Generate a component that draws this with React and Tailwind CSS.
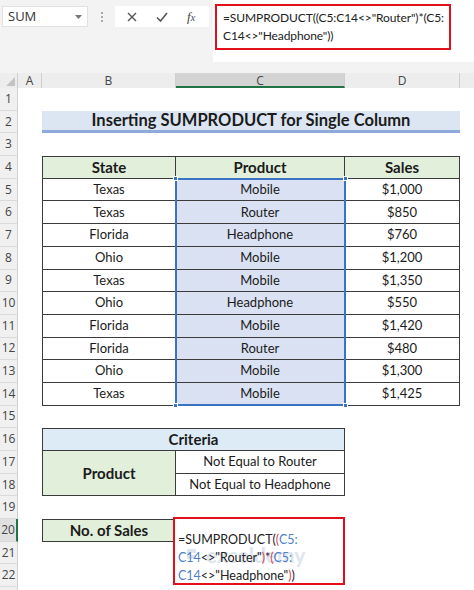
import React from 'react';

const ROW = [
  '', 'row-start-1', 'row-start-2', 'row-start-3', 'row-start-4', 'row-start-5', 'row-start-6',
  'row-start-7', 'row-start-8', 'row-start-9', 'row-start-10', 'row-start-11', 'row-start-12',
  'row-start-13', 'row-start-14', 'row-start-15', 'row-start-16', 'row-start-17', 'row-start-18',
  'row-start-19', 'row-start-20', 'row-start-21', 'row-start-22', 'row-start-23',
];
const COL = ['', 'col-start-1', 'col-start-2', 'col-start-3', 'col-start-4', 'col-start-5', 'col-start-6'];

const SALES = [
  ['Texas', 'Mobile', '$1,000'],
  ['Texas', 'Router', '$850'],
  ['Florida', 'Headphone', '$760'],
  ['Ohio', 'Mobile', '$1,200'],
  ['Texas', 'Mobile', '$1,350'],
  ['Ohio', 'Headphone', '$550'],
  ['Florida', 'Mobile', '$1,420'],
  ['Florida', 'Router', '$480'],
  ['Ohio', 'Mobile', '$1,300'],
  ['Texas', 'Mobile', '$1,425'],
];

const LINE = 'border-[#3b3b3b]';

function Cell({ col, row, className = '', children }) {
  return (
    <div className={`${COL[col]} ${ROW[row]} flex items-center justify-center ${className}`}>
      {children}
    </div>
  );
}

function Toolbar() {
  return (
    <div className="flex h-[73px] bg-[#f3f3f3] font-['Open_Sans',sans-serif]">
      {/* Name box */}
      <div className="ml-[2px] mt-[6px] flex h-[21px] w-[86px] items-center justify-between border border-[#e1e1e1] bg-white pl-[5px] pr-[5px] text-[13px] text-[#333]">
        <span>SUM</span>
        <svg width="7" height="4" viewBox="0 0 7 4"><path d="M0 0h7L3.5 4z" fill="#777" /></svg>
      </div>
      <div className="ml-[13px] mt-[12px] flex flex-col gap-[2px]">
        <span className="h-[2px] w-[2px] bg-[#aaa]" />
        <span className="h-[2px] w-[2px] bg-[#aaa]" />
        <span className="h-[2px] w-[2px] bg-[#aaa]" />
      </div>
      {/* Cancel / enter / fx */}
      <div className="ml-[12px] mt-[6px] flex h-[21px] w-[94px] items-center bg-white pl-[12px]">
        <svg width="10" height="10" viewBox="0 0 10 10"><path d="M1 1l8 8M9 1l-8 8" stroke="#555" strokeWidth="1.4" /></svg>
        <svg className="ml-[19px]" width="12" height="10" viewBox="0 0 12 10"><path d="M1 5.5l3.5 3.5L11 1" stroke="#555" strokeWidth="1.6" fill="none" /></svg>
        <span className="ml-[19px] font-['Liberation_Serif',serif] text-[13px] italic text-[#444]">
          f<span className="text-[10px]">x</span>
        </span>
      </div>
      {/* Formula area */}
      <div className="ml-[4px] h-[62px] flex-1 bg-white pl-[2px] pt-[4px]">
        <div className="h-[46px] w-[236px] whitespace-nowrap border-[2.5px] border-[#e3101b] pl-[6px] pt-[3px] font-['Lato',sans-serif] text-[12px] leading-[18px] tracking-[-0.1px] text-[#222]">
          =SUMPRODUCT((C5:C14&lt;&gt;"Router")*(C5:
          <br />
          C14&lt;&gt;"Headphone"))
        </div>
      </div>
    </div>
  );
}

function ColumnHeaders() {
  return (
    <div className="flex h-[15px] bg-[#ededed] font-['Open_Sans',sans-serif] text-[12px] leading-[15px] text-[#444]">
      <div className="relative w-[18px] border-r border-[#cfcfcf]">
        <svg className="absolute bottom-[2px] right-[2px]" width="9" height="9" viewBox="0 0 9 9"><path d="M9 0v9H0z" fill="#c4c4c4" /></svg>
      </div>
      <div className="w-[24px] border-r border-[#cfcfcf] text-center">A</div>
      <div className="w-[134px] border-r border-[#cfcfcf] text-center">B</div>
      <div className="w-[169px] border-r border-b-2 border-[#cfcfcf] border-b-[#217346] bg-[#d4d4d4] text-center">C</div>
      <div className="w-[115px] border-r border-[#cfcfcf] text-center">D</div>
      <div className="flex-1" />
    </div>
  );
}

function Handle({ className }) {
  return <span className={`absolute h-[5px] w-[5px] border border-white bg-[#3a72c4] ${className}`} />;
}

function Sheet() {
  const rows = Array.from({ length: 23 }, (_, i) => i + 1);
  return (
    <div className="grid grid-cols-[18px_24px_134px_169px_115px_1fr] grid-rows-[repeat(23,22.7px)] text-[13px]">
      {rows.map((r) => (
        <div
          key={r}
          className={`${COL[1]} ${ROW[r]} flex items-center justify-center border-b border-[#dadada] font-['Open_Sans',sans-serif] text-[12px] text-[#444] ${
            r === 20 ? 'border-r-2 border-r-[#217346] bg-[#e0e0e0]' : 'border-r border-r-[#cfcfcf] bg-[#f0f0f0]'
          }`}
        >
          {r < 23 ? r : ''}
        </div>
      ))}

      {/* Title */}
      <div className={`${COL[3]} ${ROW[2]} col-span-3 flex items-center justify-center border-b-[3px] border-[#8eaadb] bg-[#dce6f2] text-[16.5px] font-bold`}>
        Inserting SUMPRODUCT for Single Column
      </div>

      {/* Main table header */}
      {['State', 'Product', 'Sales'].map((h, i) => (
        <Cell
          key={h}
          col={3 + i}
          row={4}
          className={`border-y border-r ${i === 0 ? 'border-l' : ''} ${LINE} bg-[#e2efda] text-[15px] font-bold`}
        >
          {h}
        </Cell>
      ))}

      {/* Main table body */}
      {SALES.map((rec, ri) =>
        rec.map((v, ci) => (
          <Cell
            key={`${ri}-${ci}`}
            col={3 + ci}
            row={5 + ri}
            className={`border-b border-r ${ci === 0 ? 'border-l' : ''} ${LINE} ${ci === 1 ? 'bg-[#d9e1f2]' : ''}`}
          >
            {v}
          </Cell>
        ))
      )}

      {/* Selection outline C5:C14 */}
      <div className={`${COL[4]} ${ROW[5]} relative row-span-10 -ml-[1px] -mr-[1px] -mt-[1px] border-2 border-[#3a72c4]`}>
        <Handle className="-left-[4px] -top-[4px]" />
        <Handle className="-right-[4px] -top-[4px]" />
        <Handle className="-bottom-[4px] -left-[4px]" />
        <Handle className="-bottom-[4px] -right-[4px]" />
      </div>

      {/* Criteria */}
      <div className={`${COL[3]} ${ROW[16]} col-span-2 flex items-center justify-center border border-[#3b3b3b] bg-[#ddebf7] text-[15px] font-bold`}>
        Criteria
      </div>
      <div className={`${COL[3]} ${ROW[17]} row-span-2 flex items-center justify-center border-x border-b border-[#3b3b3b] bg-[#e2efda] text-[15px] font-bold`}>
        Product
      </div>
      <Cell col={4} row={17} className={`border-b border-r ${LINE}`}>Not Equal to Router</Cell>
      <Cell col={4} row={18} className={`border-b border-r ${LINE}`}>Not Equal to Headphone</Cell>

      {/* Result */}
      <Cell col={3} row={20} className={`border ${LINE} bg-[#e2efda] text-[15px] font-bold`}>No. of Sales</Cell>
      <div className={`${COL[4]} ${ROW[20]} relative row-span-3 -ml-[3px] -mt-[2px] mb-[2px] whitespace-nowrap border-[2.5px] border-[#e3101b] bg-white pl-[3px] pt-[12px] text-[12.5px] leading-[18px] text-[#222]`}>
        <span className="pointer-events-none absolute left-[10px] top-[27px] flex items-center gap-[3px] text-[21px] font-bold text-[#c9d5e6] opacity-60">
          <svg width="18" height="16" viewBox="0 0 18 16"><path d="M2 2h9v4H6v2h5v4H2z" fill="#c9d5e6" /></svg>
          exceldemy
        </span>
        <div className="relative">
          =SUMPRODUCT(<span className="text-[#d1455d]">(</span><span className="text-[#4f7fc8]">C5:</span>
          <br />
          <span className="text-[#4f7fc8]">C14</span>&lt;&gt;"Router"<span className="text-[#d1455d]">)</span>*<span className="text-[#d1455d]">(</span><span className="text-[#4f7fc8]">C5:</span>
          <br />
          <span className="text-[#4f7fc8]">C14</span>&lt;&gt;"Headphone"<span className="text-[#d1455d]">)</span>)
        </div>
      </div>
    </div>
  );
}

export default function App() {
  return (
    <div className="h-[590px] w-[474px] overflow-hidden bg-white font-['Lato',sans-serif] text-[#1b1b1b]">
      <Toolbar />
      <ColumnHeaders />
      <Sheet />
    </div>
  );
}
